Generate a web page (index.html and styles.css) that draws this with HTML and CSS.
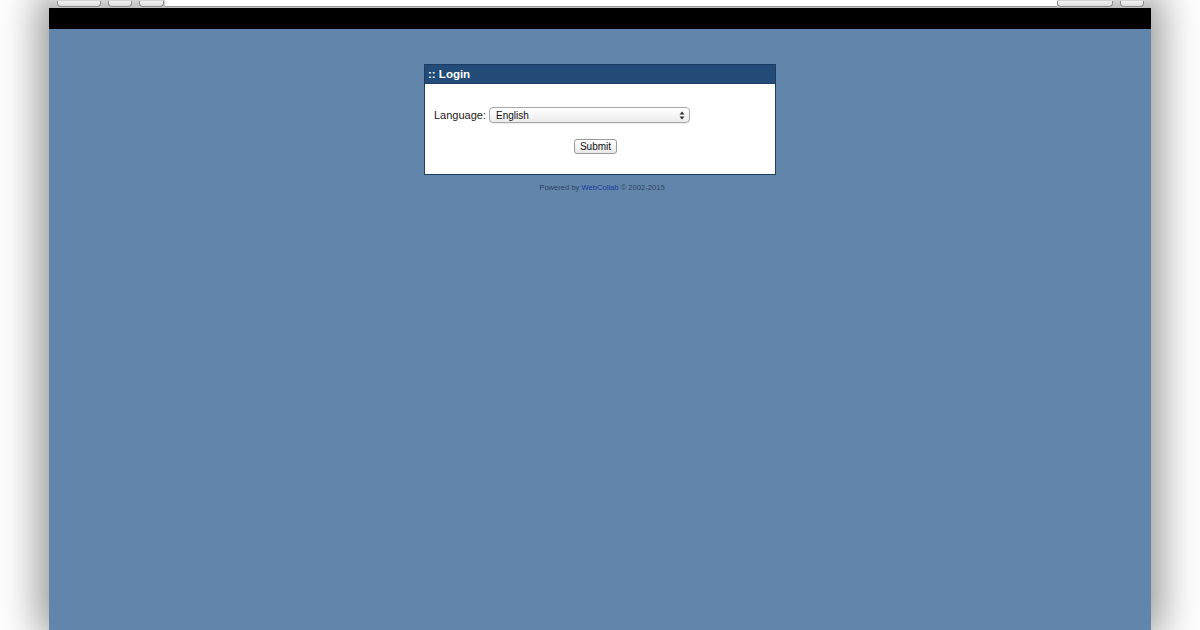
FILE: index.html
```html
<!DOCTYPE html>
<html lang="en">
<head>
    <meta charset="UTF-8">
    <title>WebCollab - Login</title>
    <link rel="stylesheet" href="styles.css">
</head>
<body>

<div class="window">
    <!-- browser toolbar (cut off at top) -->
    <div class="toolbar">
        <span class="tb-btn tb-back"></span>
        <span class="tb-btn tb-fwd"></span>
        <span class="tb-btn tb-reload"></span>
        <span class="tb-address"></span>
        <span class="tb-btn tb-search"></span>
        <span class="tb-btn tb-menu"></span>
    </div>
    <div class="topbar"></div>

    <div class="content">
        <div class="login-box">
            <div class="login-head">:: Login</div>
            <div class="login-body">
                <div class="form-row">
                    <label for="lang">Language:</label>
                    <div class="select-wrap">
                        <select id="lang">
                            <option>English</option>
                        </select>
                        <svg class="select-arrows" width="6" height="9" viewBox="0 0 6 9">
                            <path d="M0.5 3.5 L3 0.5 L5.5 3.5 Z M0.5 5.5 L3 8.5 L5.5 5.5 Z" fill="#333"/>
                        </svg>
                    </div>
                </div>
                <div class="form-submit">
                    <button type="button">Submit</button>
                </div>
            </div>
        </div>
        <div class="powered">Powered by <a href="#">WebCollab</a> &copy; 2002-2015</div>
    </div>
</div>

</body>
</html>
```

FILE: styles.css
```css
* {
    box-sizing: border-box;
}
body {
    margin: 0;
    padding: 0;
    background-color: #fff;
    font-family: 'Liberation Sans', Arial, sans-serif;
    overflow: hidden;
}
.window {
    width: 1102px;
    height: 630px;
    margin: 0 auto;
    display: flex;
    flex-direction: column;
    box-shadow: 0 0 40px 8px rgba(0, 0, 0, 0.45);
}
.toolbar {
    height: 8px;
    background: linear-gradient(#d4d4d4, #bdbdbd);
    display: flex;
    align-items: flex-end;
    padding: 0 7px 1px 8px;
    gap: 7px;
}
.tb-btn {
    display: block;
    height: 6px;
    border: 1px solid #8e8e8e;
    border-top: none;
    border-radius: 0 0 4px 4px;
    background: linear-gradient(#f0f0f0, #dcdcdc);
}
.tb-back { width: 44px; }
.tb-fwd { width: 24px; }
.tb-reload { width: 25px; }
.tb-address {
    flex: 1;
    height: 7px;
    background: #fff;
    border-bottom: 1px solid #9a9a9a;
    margin-left: -6px;
}
.tb-search { width: 56px; margin-left: -7px; }
.tb-menu { width: 24px; }
.topbar {
    height: 21px;
    background: #000;
}
.content {
    flex: 1;
    background-color: #6286ab;
    padding-top: 35px;
}
.login-box {
    width: 352px;
    margin: 0 auto;
    border: 1px solid #1b3d63;
    background: #fff;
}
.login-head {
    background-color: #234b77;
    color: #fff;
    font-weight: bold;
    font-size: 11.5px;
    line-height: 18px;
    height: 19px;
    padding-left: 3px;
    border-bottom: 1px solid #1b3d63;
}
.login-body {
    padding: 23px 9px 20px 9px;
}
.form-row {
    display: flex;
    align-items: center;
    gap: 3px;
    height: 16px;
}
.form-row label {
    font-size: 11px;
    color: #222;
}
.select-wrap {
    position: relative;
    width: 201px;
    height: 16px;
}
.select-wrap select {
    appearance: none;
    -webkit-appearance: none;
    display: block;
    width: 100%;
    height: 16px;
    border: 1px solid #a9a9a9;
    border-radius: 4px;
    background: linear-gradient(#ffffff, #ececec);
    font-family: 'Liberation Sans', Arial, sans-serif;
    font-size: 10px;
    color: #111;
    padding: 0 0 0 6px;
    margin: 0;
    box-shadow: 0 1px 1px rgba(0, 0, 0, 0.08);
}
.select-arrows {
    position: absolute;
    right: 5px;
    top: 4px;
}
.form-submit {
    text-align: center;
    margin-top: 16px;
    height: 15px;
}
.form-submit button {
    font-family: 'Liberation Sans', Arial, sans-serif;
    font-size: 10px;
    color: #111;
    height: 15px;
    padding: 0 5px;
    border: 1px solid #9a9a9a;
    border-radius: 3px;
    background: linear-gradient(#ffffff, #e8e8e8);
    line-height: 13px;
    margin-left: -9px;
    vertical-align: top;
}
.powered {
    text-align: center;
    font-size: 7.6px;
    color: #2c4366;
    margin-top: 8px;
    padding-left: 4px;
}
.powered a {
    color: #1a3aa0;
    text-decoration: none;
}
```
